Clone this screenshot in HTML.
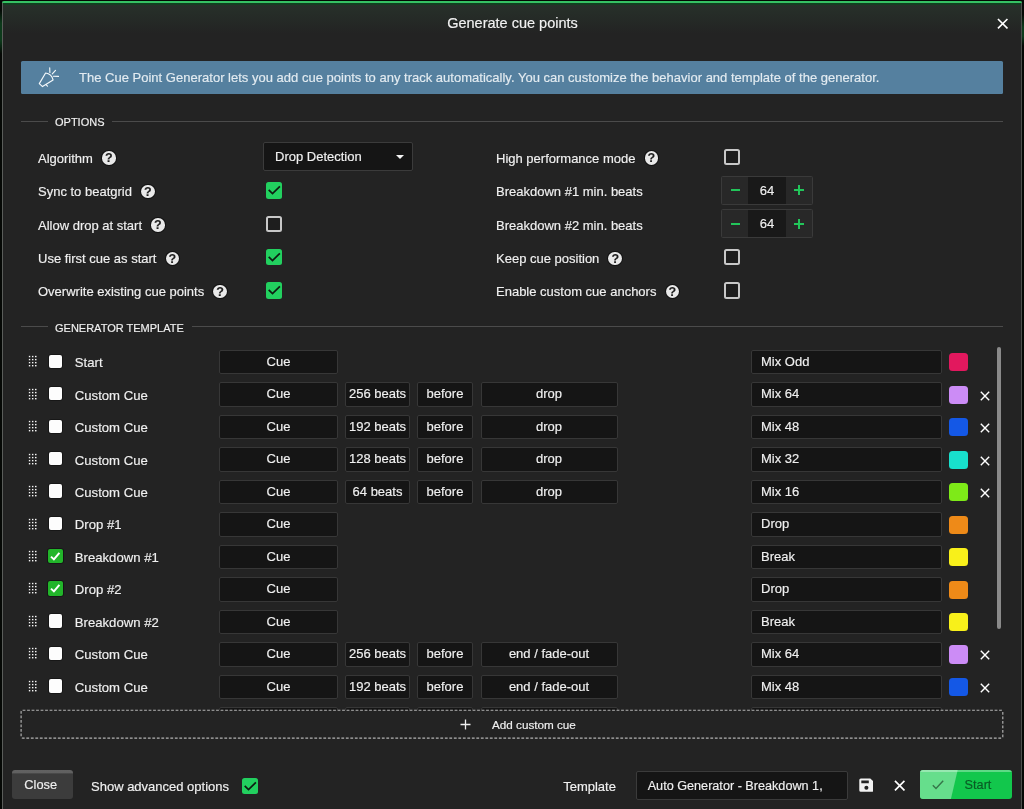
<!DOCTYPE html>
<html lang="en">
<head>
<meta charset="utf-8">
<title>Generate cue points</title>
<style>
*{box-sizing:border-box;margin:0;padding:0}
html,body{width:1024px;height:809px;overflow:hidden;background:#050805}
body{font-family:"Liberation Sans",Arial,Helvetica,sans-serif;font-size:13px;color:#f0f0f0;position:relative;-webkit-text-stroke:0.16px currentColor}
.abs,.win *{position:absolute}
.win{position:absolute;left:0;top:0;width:1024px;height:809px;overflow:hidden;will-change:transform}
.bg{left:2px;top:1px;width:1020px;height:808px;background:#232323}
.edgeL{left:2px;top:3px;width:1px;height:806px;background:#5a5d5a}
.edgeR{left:1021px;top:3px;width:1px;height:806px;background:#4c4f4c}
.topbar{left:2px;top:1.3px;width:1020px;height:2px;background:#35c163;border-radius:2px 2px 0 0}
.topbar2{left:2px;top:3.3px;width:1020px;height:2px;background:#123f20}
.hdr{left:2px;top:4px;width:1020px;height:30px;background:linear-gradient(#27312a,#232323)}
.title{left:0.5px;top:13.6px;width:1024px;text-align:center;font-size:14.5px;line-height:18px;color:#f2f2f2}
.t{white-space:nowrap;line-height:16px;height:16px}
.banner{left:21px;top:61.1px;width:982px;height:32.7px;background:#55809f;border-radius:1.5px}
.banner .t{left:58px;top:8.8px;letter-spacing:0.01px;color:#e3ebf1}
.sec{height:1px;background:#4b4b4b}
.sectxt{font-size:11px;line-height:14px;color:#f0f0f0;white-space:nowrap}
.q{width:13.6px;height:13.6px;border-radius:50%;background:#e9e9e9;color:#1c1c1c;font-weight:bold;font-size:12.5px;line-height:14px;text-align:center;box-shadow:0 0 0 1px #121212}
.cb{width:16.6px;height:16.6px;border-radius:2.5px}
.cb.on{background:#22d05f}
.cb.off{border:2px solid #c8c8c8;background:#1e1e1e}
.cb svg{left:0;top:0}
.box{background:#151515;border:1px solid #373737;border-radius:2px;height:24.4px;line-height:22.2px;white-space:nowrap;color:#f0f0f0}
.box.c{text-align:center}
.box.l{padding-left:9px}

.lab{white-space:nowrap;height:16px;line-height:16px;display:flex;align-items:center}
.lab *{position:static}
.lab .q{margin-left:9.1px;position:relative;top:-0.5px;flex:none}
.dd{left:263px;top:142.4px;width:150px;height:29px;background:#151515;border:1px solid #3b3b3b;border-radius:2px}
.dd .t{left:11px;top:6.1px;color:#f0f0f0}
.dd i{left:132px;top:12px;width:0;height:0;border-left:4px solid transparent;border-right:4px solid transparent;border-top:4px solid #f4f4f4}
.step{width:92px;height:29px;border:1px solid #3a3a3a;border-radius:1.5px;background:#282828}
.step .mid{left:26px;top:0;width:38px;height:27px;background:#191919;text-align:center;line-height:27px;color:#f0f0f0}
.step .m{left:8.6px;top:12.5px;width:9px;height:2px;background:#22c55a}
.step .p1{left:72.2px;top:12.5px;width:10px;height:2px;background:#22c55a}
.step .p2{left:76.2px;top:8.5px;width:2px;height:10px;background:#22c55a}

.hd{width:9.3px;height:12.2px;background-image:radial-gradient(circle,#f6f6f6 0.8px,transparent 1.15px);background-size:3.1px 3.05px}
.nc{width:13.2px;height:13.4px;border-radius:2px;background:#fdfdfd;box-shadow:0 0 0 0.8px #141414}
.nc.on{width:14.4px;height:14.4px;background:#22b52a}
.sw{width:18.2px;height:18.3px;border-radius:3.5px}
.rowlab{white-space:nowrap;line-height:16px;height:16px;left:74.8px;font-size:13.15px}

.btnc{left:12px;top:770px;width:61px;height:29px;background:linear-gradient(#626262 0,#606060 3px,#3c3c3c 3.8px,#3c3c3c 100%);border-radius:3px;text-align:center;line-height:30.6px;color:#f0f0f0;font-size:12.8px;padding-right:3.6px}
.tin{left:635.5px;top:771px;width:212.5px;height:28.5px;background:#151515;border:1px solid #3b3b3b;border-radius:2px}
.tin .t{left:11.2px;top:5.7px;font-size:12.65px}
.start{left:920px;top:770px;width:91.8px;height:29px;border-radius:3px;overflow:hidden;background:#12c74c}
.start .lt{left:0;top:0;width:37.7px;height:29px;background:#66de8c;clip-path:polygon(0 0,100% 0,82% 100%,0 100%)}
.start .hl{left:0;top:0;width:100%;height:1.5px;background:rgba(255,255,255,.32)}
.start .t{left:44.6px;top:7px;color:#0a5a25;font-size:12.7px}
</style>
</head>
<body>
<div class="win">
  <div class="bg"></div>
  <div class="hdr"></div>
  <div class="topbar"></div><div class="topbar2"></div>
  <div style="left:0;top:10px;width:3px;height:44px;background:linear-gradient(rgba(14,60,28,0),#0d3a1b 30%,#0d3a1b 70%,rgba(14,60,28,0))"></div><div style="left:1021px;top:14px;width:3px;height:32px;background:linear-gradient(rgba(14,60,28,0),#0d3a1b 40%,#0d3a1b 70%,rgba(14,60,28,0))"></div><div class="edgeL"></div><div class="edgeR"></div>
  <div class="title">Generate cue points</div>
  <svg style="left:997px;top:18.4px" width="11.4" height="11.4" viewBox="0 0 12 12"><path d="M1 1L11 11M11 1L1 11" stroke="#fff" stroke-width="1.7" fill="none"/></svg>

  <div class="banner">
    <svg style="left:17px;top:5.9px" width="22" height="21" viewBox="0 0 22 21" fill="none" stroke="#f4f8fb" stroke-width="1.15" stroke-linecap="round" stroke-linejoin="round">
      <path d="M7.6 6Q13.6 6.8 15.1 12.9L4.5 19.6L1.3 16.6Z"/><path d="M8 17.7L9.5 19.2"/>
      <path d="M11.7 0.8L11.9 5.5M17.5 3.4L14.3 6.8M15.4 9.3L20.5 9.4"/>
    </svg>
    <div class="t">The Cue Point Generator lets you add cue points to any track automatically. You can customize the behavior and template of the generator.</div>
  </div>

  <!-- OPTIONS -->
  <div class="sec" style="left:21px;top:121px;width:27px"></div>
  <div class="sec" style="left:112px;top:121px;width:891px"></div>
  <div class="sectxt" style="left:55px;top:115px">OPTIONS</div>

  <div class="lab" style="left:38px;top:150.55px"><span>Algorithm</span><span class="q">?</span></div>
  <div class="lab" style="left:38px;top:184.05px"><span>Sync to beatgrid</span><span class="q">?</span></div>
  <div class="lab" style="left:38px;top:217.55px"><span>Allow drop at start</span><span class="q">?</span></div>
  <div class="lab" style="left:38px;top:250.80px"><span>Use first cue as start</span><span class="q">?</span></div>
  <div class="lab" style="left:38px;top:284.05px"><span>Overwrite existing cue points</span><span class="q">?</span></div>
  <div class="lab" style="left:496px;top:150.55px"><span>High performance mode</span><span class="q">?</span></div>
  <div class="lab" style="left:496px;top:184.05px"><span>Breakdown #1 min. beats</span></div>
  <div class="lab" style="left:496px;top:217.55px"><span>Breakdown #2 min. beats</span></div>
  <div class="lab" style="left:496px;top:250.80px"><span>Keep cue position</span><span class="q">?</span></div>
  <div class="lab" style="left:496px;top:284.05px"><span>Enable custom cue anchors</span><span class="q">?</span></div>
  <div class="dd"><div class="t">Drop Detection</div><i></i></div>
  <div class="cb on" style="left:265.75px;top:182.00px"><svg width="16.6" height="16.6" viewBox="0 0 16.6 16.6"><path d="M2.7 7.8L6.5 11.5L13.9 4.3" stroke="#0e1c12" stroke-width="1.7" fill="none"/></svg></div>
  <div class="cb off" style="left:265.75px;top:215.50px"></div>
  <div class="cb on" style="left:265.75px;top:248.75px"><svg width="16.6" height="16.6" viewBox="0 0 16.6 16.6"><path d="M2.7 7.8L6.5 11.5L13.9 4.3" stroke="#0e1c12" stroke-width="1.7" fill="none"/></svg></div>
  <div class="cb on" style="left:265.75px;top:282.00px"><svg width="16.6" height="16.6" viewBox="0 0 16.6 16.6"><path d="M2.7 7.8L6.5 11.5L13.9 4.3" stroke="#0e1c12" stroke-width="1.7" fill="none"/></svg></div>
  <div class="cb off" style="left:723.75px;top:148.50px"></div>
  <div class="cb off" style="left:723.75px;top:248.75px"></div>
  <div class="cb off" style="left:723.75px;top:282.00px"></div>
  <div class="step" style="left:721px;top:175.75px"><div class="mid">64</div><div class="m"></div><div class="p1"></div><div class="p2"></div></div>
  <div class="step" style="left:721px;top:209.25px"><div class="mid">64</div><div class="m"></div><div class="p1"></div><div class="p2"></div></div>

  <div class="sec" style="left:21px;top:326.1px;width:27px"></div>
  <div class="sec" style="left:192px;top:326.1px;width:811px"></div>
  <div class="sectxt" style="left:55px;top:320.5px">GENERATOR TEMPLATE</div>
  <div class="scroll" style="left:997px;top:347px;width:3.5px;height:282px;background:#8a8a8a;border-radius:2px"></div>
  <div class="hd" style="left:28.35px;top:355.13px"></div>
  <div class="nc" style="left:49px;top:354.55px"></div>
  <div class="rowlab" style="top:355.10px">Start</div>
  <div class="box c" style="left:219px;top:350.00px;width:119px">Cue</div>
  <div class="box l" style="left:751px;top:350.00px;width:190.5px">Mix Odd</div>
  <div class="sw" style="left:949.4px;top:353.20px;background:#e2185e"></div>
  <div class="hd" style="left:28.35px;top:387.61px"></div>
  <div class="nc" style="left:49px;top:387.03px"></div>
  <div class="rowlab" style="top:387.58px">Custom Cue</div>
  <div class="box c" style="left:219px;top:382.48px;width:119px">Cue</div>
  <div class="box c" style="left:345px;top:382.48px;width:65px">256 beats</div>
  <div class="box c" style="left:417.2px;top:382.48px;width:55.5px">before</div>
  <div class="box c" style="left:480.5px;top:382.48px;width:137px">drop</div>
  <div class="box l" style="left:751px;top:382.48px;width:190.5px">Mix 64</div>
  <div class="sw" style="left:949.4px;top:385.68px;background:#cc8cf6"></div>
  <svg style="left:980px;top:390.68px" width="10" height="10" viewBox="0 0 10 10"><path d="M0.8 0.8L9.2 9.2M9.2 0.8L0.8 9.2" stroke="#fff" stroke-width="1.4" fill="none"/></svg>
  <div class="hd" style="left:28.35px;top:420.08px"></div>
  <div class="nc" style="left:49px;top:419.50px"></div>
  <div class="rowlab" style="top:420.05px">Custom Cue</div>
  <div class="box c" style="left:219px;top:414.95px;width:119px">Cue</div>
  <div class="box c" style="left:345px;top:414.95px;width:65px">192 beats</div>
  <div class="box c" style="left:417.2px;top:414.95px;width:55.5px">before</div>
  <div class="box c" style="left:480.5px;top:414.95px;width:137px">drop</div>
  <div class="box l" style="left:751px;top:414.95px;width:190.5px">Mix 48</div>
  <div class="sw" style="left:949.4px;top:418.15px;background:#1458e6"></div>
  <svg style="left:980px;top:423.15px" width="10" height="10" viewBox="0 0 10 10"><path d="M0.8 0.8L9.2 9.2M9.2 0.8L0.8 9.2" stroke="#fff" stroke-width="1.4" fill="none"/></svg>
  <div class="hd" style="left:28.35px;top:452.56px"></div>
  <div class="nc" style="left:49px;top:451.98px"></div>
  <div class="rowlab" style="top:452.53px">Custom Cue</div>
  <div class="box c" style="left:219px;top:447.43px;width:119px">Cue</div>
  <div class="box c" style="left:345px;top:447.43px;width:65px">128 beats</div>
  <div class="box c" style="left:417.2px;top:447.43px;width:55.5px">before</div>
  <div class="box c" style="left:480.5px;top:447.43px;width:137px">drop</div>
  <div class="box l" style="left:751px;top:447.43px;width:190.5px">Mix 32</div>
  <div class="sw" style="left:949.4px;top:450.62px;background:#18e0cc"></div>
  <svg style="left:980px;top:455.62px" width="10" height="10" viewBox="0 0 10 10"><path d="M0.8 0.8L9.2 9.2M9.2 0.8L0.8 9.2" stroke="#fff" stroke-width="1.4" fill="none"/></svg>
  <div class="hd" style="left:28.35px;top:485.03px"></div>
  <div class="nc" style="left:49px;top:484.45px"></div>
  <div class="rowlab" style="top:485.00px">Custom Cue</div>
  <div class="box c" style="left:219px;top:479.90px;width:119px">Cue</div>
  <div class="box c" style="left:345px;top:479.90px;width:65px">64 beats</div>
  <div class="box c" style="left:417.2px;top:479.90px;width:55.5px">before</div>
  <div class="box c" style="left:480.5px;top:479.90px;width:137px">drop</div>
  <div class="box l" style="left:751px;top:479.90px;width:190.5px">Mix 16</div>
  <div class="sw" style="left:949.4px;top:483.10px;background:#7eea18"></div>
  <svg style="left:980px;top:488.10px" width="10" height="10" viewBox="0 0 10 10"><path d="M0.8 0.8L9.2 9.2M9.2 0.8L0.8 9.2" stroke="#fff" stroke-width="1.4" fill="none"/></svg>
  <div class="hd" style="left:28.35px;top:517.51px"></div>
  <div class="nc" style="left:49px;top:516.93px"></div>
  <div class="rowlab" style="top:517.48px">Drop #1</div>
  <div class="box c" style="left:219px;top:512.38px;width:119px">Cue</div>
  <div class="box l" style="left:751px;top:512.38px;width:190.5px">Drop</div>
  <div class="sw" style="left:949.4px;top:515.58px;background:#ee8a18"></div>
  <div class="hd" style="left:28.35px;top:549.98px"></div>
  <div class="nc on" style="left:48.2px;top:548.90px"><svg width="14.4" height="14.4" viewBox="0 0 14.4 14.4" style="left:0;top:0"><path d="M3 7.6L5.9 10.4L11.4 3.8" stroke="#fff" stroke-width="2" fill="none"/></svg></div>
  <div class="rowlab" style="top:549.95px">Breakdown #1</div>
  <div class="box c" style="left:219px;top:544.85px;width:119px">Cue</div>
  <div class="box l" style="left:751px;top:544.85px;width:190.5px">Break</div>
  <div class="sw" style="left:949.4px;top:548.05px;background:#f8f01a"></div>
  <div class="hd" style="left:28.35px;top:582.46px"></div>
  <div class="nc on" style="left:48.2px;top:581.38px"><svg width="14.4" height="14.4" viewBox="0 0 14.4 14.4" style="left:0;top:0"><path d="M3 7.6L5.9 10.4L11.4 3.8" stroke="#fff" stroke-width="2" fill="none"/></svg></div>
  <div class="rowlab" style="top:582.43px">Drop #2</div>
  <div class="box c" style="left:219px;top:577.33px;width:119px">Cue</div>
  <div class="box l" style="left:751px;top:577.33px;width:190.5px">Drop</div>
  <div class="sw" style="left:949.4px;top:580.53px;background:#ee8a18"></div>
  <div class="hd" style="left:28.35px;top:614.93px"></div>
  <div class="nc" style="left:49px;top:614.35px"></div>
  <div class="rowlab" style="top:614.90px">Breakdown #2</div>
  <div class="box c" style="left:219px;top:609.80px;width:119px">Cue</div>
  <div class="box l" style="left:751px;top:609.80px;width:190.5px">Break</div>
  <div class="sw" style="left:949.4px;top:613.00px;background:#f8f01a"></div>
  <div class="hd" style="left:28.35px;top:647.41px"></div>
  <div class="nc" style="left:49px;top:646.83px"></div>
  <div class="rowlab" style="top:647.38px">Custom Cue</div>
  <div class="box c" style="left:219px;top:642.28px;width:119px">Cue</div>
  <div class="box c" style="left:345px;top:642.28px;width:65px">256 beats</div>
  <div class="box c" style="left:417.2px;top:642.28px;width:55.5px">before</div>
  <div class="box c" style="left:480.5px;top:642.28px;width:137px">end / fade-out</div>
  <div class="box l" style="left:751px;top:642.28px;width:190.5px">Mix 64</div>
  <div class="sw" style="left:949.4px;top:645.48px;background:#cc8cf6"></div>
  <svg style="left:980px;top:650.48px" width="10" height="10" viewBox="0 0 10 10"><path d="M0.8 0.8L9.2 9.2M9.2 0.8L0.8 9.2" stroke="#fff" stroke-width="1.4" fill="none"/></svg>
  <div class="hd" style="left:28.35px;top:679.88px"></div>
  <div class="nc" style="left:49px;top:679.30px"></div>
  <div class="rowlab" style="top:679.85px">Custom Cue</div>
  <div class="box c" style="left:219px;top:674.75px;width:119px">Cue</div>
  <div class="box c" style="left:345px;top:674.75px;width:65px">192 beats</div>
  <div class="box c" style="left:417.2px;top:674.75px;width:55.5px">before</div>
  <div class="box c" style="left:480.5px;top:674.75px;width:137px">end / fade-out</div>
  <div class="box l" style="left:751px;top:674.75px;width:190.5px">Mix 48</div>
  <div class="sw" style="left:949.4px;top:677.95px;background:#1458e6"></div>
  <svg style="left:980px;top:682.95px" width="10" height="10" viewBox="0 0 10 10"><path d="M0.8 0.8L9.2 9.2M9.2 0.8L0.8 9.2" stroke="#fff" stroke-width="1.4" fill="none"/></svg>
  <div style="left:0;top:707.23px;width:1003px;height:2.77px;overflow:hidden"><div class="box" style="left:219px;top:0;width:119px"></div><div class="box" style="left:345px;top:0;width:65px"></div><div class="box" style="left:417.2px;top:0;width:55.5px"></div><div class="box" style="left:480.5px;top:0;width:137px"></div><div class="box" style="left:751px;top:0;width:190.5px"></div></div>
  <div class="addc" style="left:20px;top:709.5px;width:984px;height:29.4px;background:#232323"></div><svg style="left:20px;top:709px" width="984" height="31" viewBox="0 0 984 31"><rect x="1.1" y="1.2" width="981.7" height="27.9" rx="1.5" fill="none" stroke="#b4b4b4" stroke-width="1.15" stroke-dasharray="2.8 1.7"/></svg>
  <svg style="left:460px;top:719px" width="11" height="11" viewBox="0 0 11 11"><path d="M5.5 0.5V10.5M0.5 5.5H10.5" stroke="#f0f0f0" stroke-width="1.3" fill="none"/></svg>
  <div class="t" style="left:492px;top:716.8px;font-size:11.7px">Add custom cue</div>

  <div class="btnc">Close</div>
  <div class="t" style="left:91px;top:779px">Show advanced options</div>
  <div class="cb on" style="left:241.6px;top:777.5px"><svg width="16.6" height="16.6" viewBox="0 0 16.6 16.6"><path d="M2.7 7.8L6.5 11.5L13.9 4.3" stroke="#0e1c12" stroke-width="1.7" fill="none"/></svg></div>
  <div class="t" style="left:563.2px;top:779px">Template</div>
  <div class="tin"><div class="t">Auto Generator - Breakdown 1,</div></div>
  <svg style="left:858.7px;top:778px" width="14.8" height="14.2" viewBox="0 0 16 15"><path fill="#f2f2f2" fill-rule="evenodd" d="M2 0.3H12.2L15.7 3.6V13A1.7 1.7 0 0 1 14 14.7H2A1.7 1.7 0 0 1 0.3 13V2A1.7 1.7 0 0 1 2 0.3ZM2.5 2.4V5.6H10.6V2.4ZM8 8.1A2.2 2.2 0 1 0 8 12.5A2.2 2.2 0 1 0 8 8.1Z"/></svg>
  <svg style="left:893.9px;top:779.5px" width="11.4" height="11.4" viewBox="0 0 12 12"><path d="M1 1L11 11M11 1L1 11" stroke="#fff" stroke-width="1.75" fill="none"/></svg>
  <div class="start"><div class="lt"></div><div class="hl"></div><svg style="left:12.4px;top:9.8px" width="12" height="10" viewBox="0 0 12 10"><path d="M0.8 5.2L4 8.4L11.2 0.8" stroke="#357549" stroke-width="1.45" fill="none"/></svg><div class="t">Start</div></div>
</div>
</body>
</html>
